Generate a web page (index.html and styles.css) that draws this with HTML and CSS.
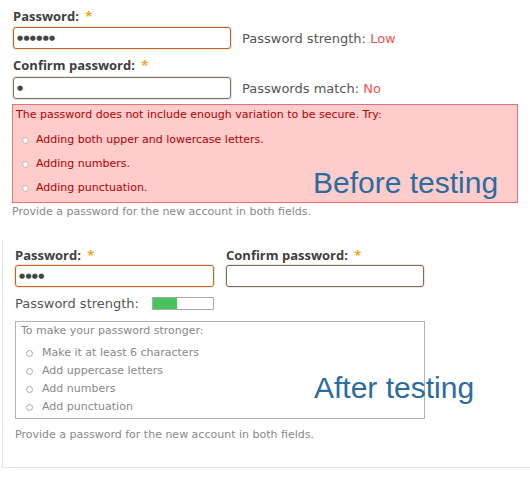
FILE: index.html
```html
<!DOCTYPE html>
<html>
<head>
<meta charset="utf-8">
<link rel="stylesheet" href="styles.css">
</head>
<body>
<section class="before">
  <label class="label">Password: <span class="req">*</span></label>
  <div class="row">
    <span class="input focus"><span class="dots">●●●●●●</span></span>
    <span class="note">Password strength: <span class="bad">Low</span></span>
  </div>
  <label class="label label-2">Confirm password: <span class="req">*</span></label>
  <div class="row row-2">
    <span class="input"><span class="dots">●</span></span>
    <span class="note">Passwords match: <span class="bad">No</span></span>
  </div>
  <div class="error">
    <div class="error-title">The password does not include enough variation to be secure. Try:</div>
    <ul class="error-list">
      <li>Adding both upper and lowercase letters.</li>
      <li>Adding numbers.</li>
      <li>Adding punctuation.</li>
    </ul>
  </div>
  <p class="help">Provide a password for the new account in both fields.</p>
</section>

<section class="after">
  <div class="cols">
    <div class="col col-a">
      <label class="label">Password: <span class="req">*</span></label>
      <span class="input focus"><span class="dots">●●●●</span></span>
    </div>
    <div class="col col-b">
      <label class="label">Confirm password: <span class="req">*</span></label>
      <span class="input"></span>
    </div>
  </div>
  <div class="strength">
    <span class="strength-label">Password strength:</span>
    <span class="meter"><span class="meter-fill" style="width: 40%"></span></span>
  </div>
  <div class="tips">
    <div class="tips-title">To make your password stronger:</div>
    <ul class="tips-list">
      <li>Make it at least 6 characters</li>
      <li>Add uppercase letters</li>
      <li>Add numbers</li>
      <li>Add punctuation</li>
    </ul>
  </div>
  <p class="help help-after">Provide a password for the new account in both fields.</p>
</section>

<div class="caption caption-before">Before testing</div>
<div class="caption caption-after">After testing</div>
</body>
</html>
```

FILE: styles.css
```css
html, body {
  margin: 0;
  padding: 0;
  background: #fff;
}
body {
  width: 530px;
  height: 480px;
  overflow: hidden;
  font-family: "DejaVu Sans", Verdana, sans-serif;
  color: #555;
}

.before {
  padding: 7px 0 0 12px;
  width: 506px;
}

.label {
  display: block;
  font-family: "Open Sans", "DejaVu Sans", sans-serif;
  font-weight: 700;
  font-size: 13px;
  line-height: 18px;
  color: #404040;
  padding-left: 1px;
}
.label-2 {
  margin-top: 7px;
}
.req {
  color: #f7a21b;
  margin-left: 3px;
}

.row {
  display: flex;
  align-items: center;
  margin-top: 2px;
  padding-left: 1px;
}
.row-2 {
  margin-top: 3px;
}

.input {
  box-sizing: border-box;
  display: flex;
  align-items: center;
  width: 218px;
  height: 22px;
  border: 1px solid #7f6e5f;
  border-radius: 3px;
  background: #fff;
  box-shadow: 0 0 0 1px #ebe8e3;
  padding-left: 3px;
}
.input.focus {
  border-color: #c6631f;
}
.dots {
  font-size: 7px;
  line-height: 10px;
  color: #444;
  letter-spacing: 0.3px;
}

.note {
  margin-left: 11px;
  font-size: 13px;
  color: #555;
}
.bad {
  color: #ef5350;
}

.error {
  margin-top: 5px;
  box-sizing: border-box;
  width: 506px;
  height: 99px;
  border: 1px solid #e57373;
  background: #ffcccc;
  padding: 2px 0 0 3px;
  color: #b00000;
  font-size: 11px;
}
.error-title {
  line-height: 16px;
}
.error-list {
  list-style: none;
  margin: 9px 0 0 0;
  padding: 0 0 0 6px;
}
.error-list li {
  line-height: 16px;
  margin-bottom: 8px;
  display: flex;
  align-items: center;
}
.error-list li::before {
  content: "";
  width: 5px;
  height: 5px;
  border-radius: 50%;
  border: 1px solid #c8b8b8;
  background: radial-gradient(circle at 40% 40%, #ffffff 0, #f2f2f2 50%, #d8d0d0 100%);
  margin-right: 7px;
}

.help {
  margin: 1px 0 0 0;
  font-size: 11px;
  line-height: 16px;
  color: #888;
}

.after {
  margin: 20px 0 0 2px;
  border-left: 1px solid #dde6ee;
  border-bottom: 1px solid #dde6ee;
  padding: 6px 0 24px 12px;
  width: 515px;
}
.cols {
  display: flex;
  gap: 12px;
}
.col .label {
  padding-left: 0;
}
.col .input {
  margin-top: 1px;
  width: 199px;
}
.col-b .input {
  width: 198px;
}

.strength {
  display: flex;
  align-items: center;
  margin-top: 7px;
  height: 18px;
}
.strength-label {
  font-size: 13px;
  color: #555;
  width: 137px;
}
.meter {
  box-sizing: border-box;
  display: block;
  width: 62px;
  height: 13px;
  border: 1px solid #aaa;
  background: #fff;
}
.meter-fill {
  display: block;
  height: 100%;
  background: #47c35e;
}

.tips {
  margin-top: 9px;
  box-sizing: border-box;
  width: 410px;
  height: 98px;
  border: 1px solid #b3b3b3;
  padding: 1px 0 0 5px;
  font-size: 11px;
  color: #888;
}
.tips-title {
  line-height: 16px;
}
.tips-list {
  list-style: none;
  margin: 5px 0 0 0;
  padding: 0 0 0 5px;
}
.tips-list li {
  display: flex;
  align-items: center;
  line-height: 18px;
}
.tips-list li::before {
  content: "";
  box-sizing: border-box;
  width: 7px;
  height: 7px;
  border-radius: 50%;
  border: 1px solid #aaa;
  margin-right: 9px;
}

.help-after {
  margin-top: 8px;
}

.caption {
  position: absolute;
  font-family: "Liberation Sans", Arial, sans-serif;
  font-size: 30px;
  line-height: 30px;
  color: #2b6c9e;
  white-space: nowrap;
}
.caption-before {
  left: 313px;
  top: 168px;
}
.caption-after {
  left: 314px;
  top: 373px;
}
```
